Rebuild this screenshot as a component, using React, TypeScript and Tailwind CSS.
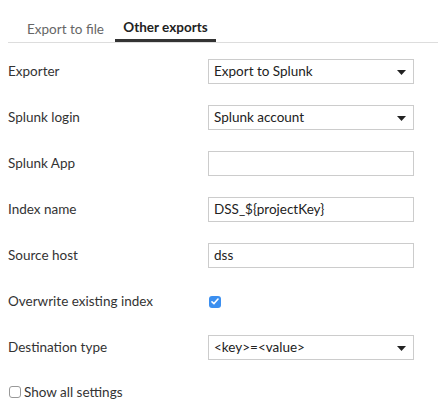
import React from "react";

const Caret = () => (
  <svg width="9" height="5" viewBox="0 0 9 5" className="absolute right-[7px] top-[10px]">
    <path d="M0 0 H9 L4.5 5 Z" fill="#222" />
  </svg>
);

const SelectBox = ({ value }: { value: string }) => (
  <div className="relative h-[25px] w-[206px] border border-[#cccccc] bg-white pl-[5px] text-[13.5px] leading-[23px] text-[#222]">
    {value}
    <Caret />
  </div>
);

const TextBox = ({ value }: { value?: string }) => (
  <div className="h-[25px] w-[206px] border border-[#cccccc] bg-white pl-[5px] text-[13.5px] leading-[23px] text-[#222]">
    {value}
  </div>
);

const Row = ({ label, children }: { label: string; children: React.ReactNode }) => (
  <div className="flex h-[25px] items-center">
    <div className="w-[200px] text-[13.5px] text-[#333]">{label}</div>
    {children}
  </div>
);

const App = () => {
  return (
    <div className="h-[416px] w-[438px] bg-white font-['Lato',sans-serif]">
      <div className="ml-[8px] flex h-[43px] items-end border-b border-[#dddddd]">
        <div className="ml-[12px] flex h-[43px] w-[91px] items-center justify-center pt-[17px] text-[13.5px] text-[#666]">
          Export to file
        </div>
        <div className="ml-[4px] flex h-[43px] w-[101px] items-center justify-center border-b-[3px] border-[#333] pt-[17px] text-[13.5px] font-bold text-[#222]">
          Other exports
        </div>
      </div>

      <div className="ml-[8px] mt-[16px] flex flex-col gap-[21px]">
        <Row label="Exporter">
          <SelectBox value="Export to Splunk" />
        </Row>
        <Row label="Splunk login">
          <SelectBox value="Splunk account" />
        </Row>
        <Row label="Splunk App">
          <TextBox />
        </Row>
        <Row label="Index name">
          <TextBox value="DSS_${projectKey}" />
        </Row>
        <Row label="Source host">
          <TextBox value="dss" />
        </Row>
        <Row label="Overwrite existing index">
          <div className="ml-[1px] flex h-[12px] w-[12px] items-center justify-center rounded-[3px] bg-[#3b8ff0]">
            <svg width="8" height="7" viewBox="0 0 8 7">
              <path d="M1 3.8 L3 5.6 L7 1" fill="none" stroke="white" strokeWidth="1.6" strokeLinecap="round" strokeLinejoin="round" />
            </svg>
          </div>
        </Row>
        <Row label="Destination type">
          <SelectBox value="<key>=<value>" />
        </Row>
      </div>

      <div className="ml-[9px] mt-[22px] flex items-center gap-[3px] text-[13.5px] text-[#333]">
        <div className="h-[12px] w-[12px] rounded-[3px] border border-[#999] bg-white" />
        <span>Show all settings</span>
      </div>
    </div>
  );
};

export default App;
